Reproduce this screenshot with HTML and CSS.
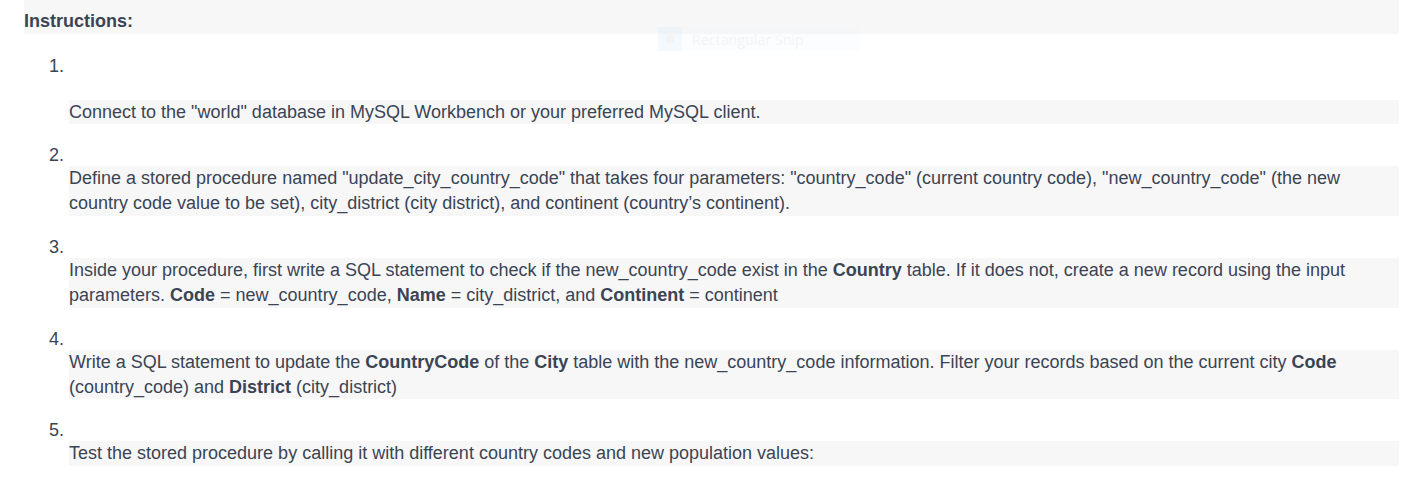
FILE: index.html
```html
<!DOCTYPE html>
<html lang="en">
<head>
<meta charset="utf-8">
<title>Instructions</title>
<link rel="stylesheet" href="styles.css">
</head>
<body>
<main class="page">
  <p class="heading"><strong>Instructions:</strong></p>
  <ol class="steps">
    <li class="step step-first"><p class="block">Connect to the "world" database in MySQL Workbench or your preferred MySQL client.</p></li>
    <li class="step"><p class="block">Define a stored procedure named "update_city_country_code" that takes four parameters: "country_code" (current country code), "new_country_code" (the new country code value to be set), city_district (city district), and continent (country’s continent).</p></li>
    <li class="step"><p class="block">Inside your procedure, first write a SQL statement to check if the new_country_code exist in the <strong>Country</strong> table. If it does not, create a new record using the input parameters. <strong>Code</strong> = new_country_code, <strong>Name</strong> = city_district, and <strong>Continent</strong> = continent</p></li>
    <li class="step"><p class="block">Write a SQL statement to update the <strong>CountryCode</strong> of the <strong>City</strong> table with the new_country_code information. Filter your records based on the current city <strong>Code</strong> (country_code) and <strong>District</strong> (city_district)</p></li>
    <li class="step"><p class="block">Test the stored procedure by calling it with different country codes and new population values:</p></li>
  </ol>
</main>
<div class="snip" aria-hidden="true">
  <span class="snip-icon"><span class="snip-dot"></span></span>
  <span class="snip-label">Rectangular Snip</span>
</div>
</body>
</html>
```

FILE: styles.css
```css
html, body {
  margin: 0;
  padding: 0;
  background: #ffffff;
}
body {
  height: 494px;
  overflow: hidden;
  position: relative;
  font-family: "Liberation Sans", Arial, sans-serif;
  font-size: 18px;
  line-height: 25px;
  color: #3b4453;
}
.page {
  padding: 0 8px 0 24px;
}
.heading {
  margin: 0;
  padding-top: 9px;
  height: 25px;
  line-height: 25px;
  background: #f7f7f8;
}
.steps {
  margin: 0;
  padding: 22px 0 0 25px;
  list-style-position: inside;
}
.step {
  margin-top: 21.08px;
  line-height: 21.1px;
}
.step-first {
  margin-top: 0;
}
.step-first .block {
  margin-top: 22.42px;
}
.block {
  margin: 0 0 0 20px;
  line-height: 24.75px;
  background: #f7f7f8;
}
.snip {
  position: absolute;
  left: 658px;
  top: 27px;
  width: 202px;
  height: 24px;
  display: flex;
  align-items: center;
  background: rgba(225, 235, 250, 0.12);
}
.snip-icon {
  width: 24px;
  height: 24px;
  display: flex;
  align-items: center;
  justify-content: center;
  background: rgba(200, 225, 250, 0.12);
}
.snip-dot {
  width: 8px;
  height: 8px;
  border-radius: 50%;
  background: #f5f3f1;
}
.snip-label {
  margin-left: 10px;
  padding-top: 2px;
  font-family: "Open Sans", sans-serif;
  font-size: 14.25px;
  line-height: 22px;
  color: #f3f4f6;
}
```
